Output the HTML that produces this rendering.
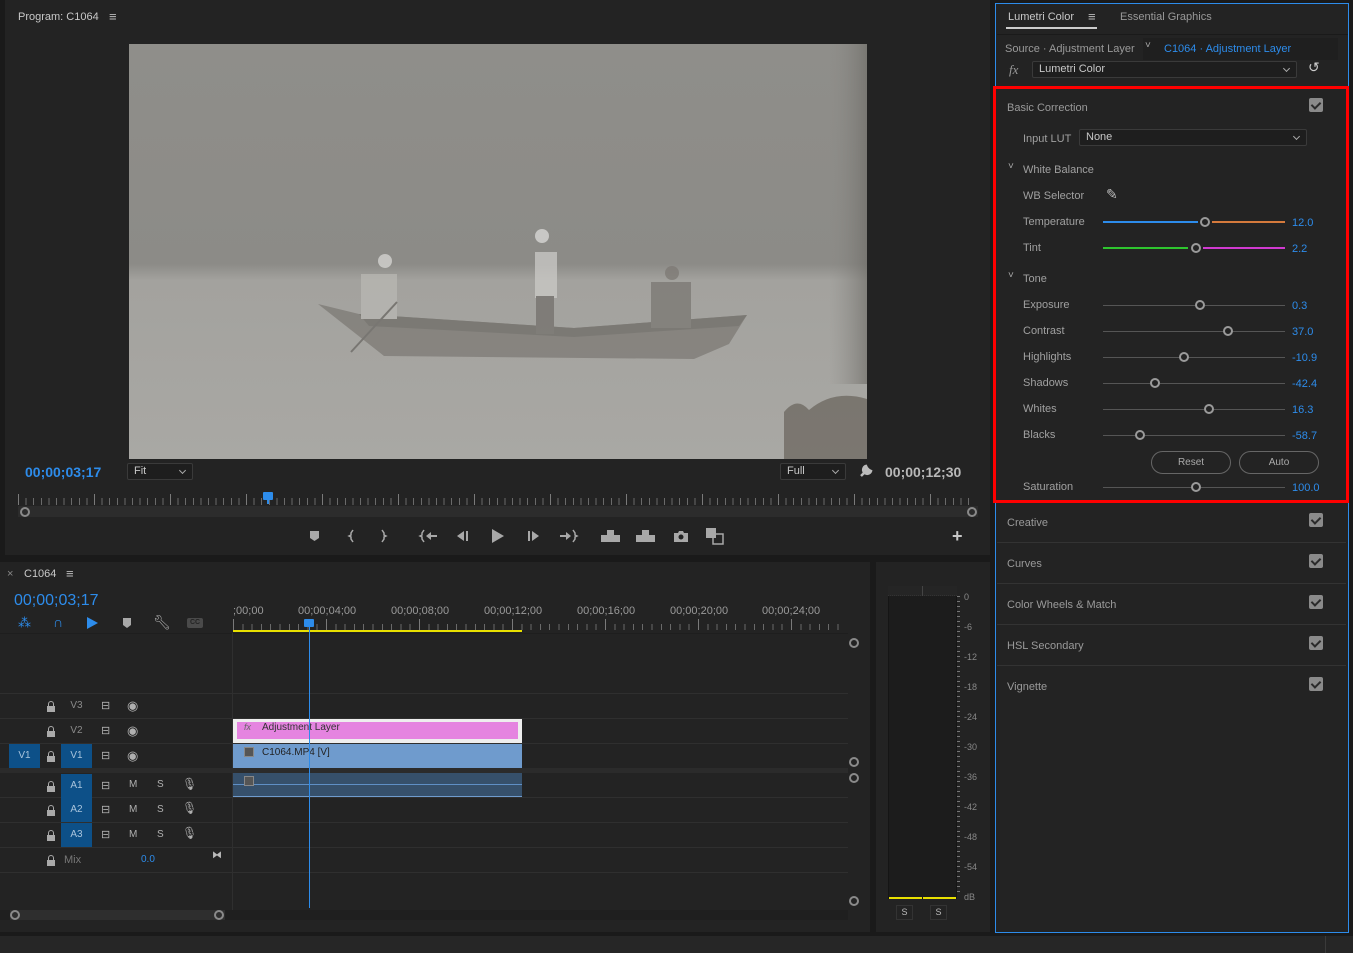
<!DOCTYPE html>
<html><head><meta charset="utf-8">
<style>
*{margin:0;padding:0;box-sizing:border-box}
body{width:1353px;height:953px;background:#1a1a1a;position:relative;overflow:hidden;font-family:"Liberation Sans",sans-serif;font-size:11px;color:#a8a8a8}
.a{position:absolute}
.p{position:absolute;background:#232323}
.t{position:absolute;white-space:nowrap}
.blue{color:#2d8ceb}
.dd{position:absolute;border:1px solid #3a3a3a;background:#1e1e1e;border-radius:2px;color:#c8c8c8;font-size:11px;padding:1px 6px}
.dd:after{content:"";position:absolute;right:7px;top:4px;width:4px;height:4px;border-right:1px solid #aaa;border-bottom:1px solid #aaa;transform:rotate(45deg)}
.lab{position:absolute;left:1023px;color:#a0a0a0;font-size:11px}
.trk{position:absolute;left:1103px;width:182px;height:1px;background:#555}
.knob{position:absolute;width:10px;height:10px;border:2px solid #9a9a9a;border-radius:50%;background:#232323}
.val{position:absolute;left:1292px;color:#2d8ceb;font-size:11px}
.chk{position:absolute;left:1309px;width:14px;height:14px;background:#8a8a8a;border-radius:2px}
.chk:after{content:"";position:absolute;left:4px;top:2px;width:4px;height:7px;border-right:2px solid #2a2a2a;border-bottom:2px solid #2a2a2a;transform:rotate(45deg)}
.sec{position:absolute;left:1007px;color:#9a9a9a;font-size:11px}
.hl{position:absolute;left:997px;width:349px;height:1px;background:#333}
.row{position:absolute;left:0;width:848px;height:1px;background:#2f2f2f}
.tb{position:absolute;width:31px;height:24px;background:#0d5088;color:#a9c4dc;font-size:10px;text-align:center;line-height:24px}
.tl{position:absolute;width:31px;height:24px;color:#8a8a8a;font-size:10px;text-align:center;line-height:24px}
.ic{position:absolute;color:#b0b0b0;font-size:11px}
.circ{position:absolute;width:10px;height:10px;border:2px solid #8a8a8a;border-radius:50%}
.lk{position:absolute;left:47px;width:8px;height:6px;background:#aaa}
.lk:before{content:"";position:absolute;left:1px;top:-5px;width:4px;height:5px;border:1.5px solid #aaa;border-bottom:none;border-radius:3px 3px 0 0}
</style></head><body>

<div class="p" style="left:5px;top:0;width:985px;height:555px"></div>
<div class="t" style="left:18px;top:11px;color:#c8c8c8">Program: C1064</div>
<div class="t" style="left:109px;top:9px;color:#bbb;font-size:13px">≡</div>

<svg class="a" style="left:129px;top:44px" width="738" height="415" viewBox="0 0 738 415">
<defs>
<linearGradient id="g1" x1="0" y1="0" x2="0" y2="1"><stop offset="0" stop-color="#8f8e8a"/><stop offset="0.53" stop-color="#8c8b87"/><stop offset="0.57" stop-color="#a3a29e"/><stop offset="1" stop-color="#a9a8a4"/></linearGradient>
<linearGradient id="g2" x1="0" y1="0" x2="1" y2="0"><stop offset="0" stop-color="#8a8985" stop-opacity="0"/><stop offset="1" stop-color="#6a6863"/></linearGradient>
</defs>
<rect width="738" height="415" fill="url(#g1)"/>
<rect x="700" y="0" width="38" height="340" fill="url(#g2)" opacity="0.6"/>
<g opacity="0.75">
<path d="M189,260 L230,270 L445,284 L618,271 L600,300 L565,315 L255,312 Z" fill="#7d7a75"/>
<path d="M230,270 L445,284 L618,271 L610,282 L445,293 L240,282Z" fill="#6e6b66"/>
<rect x="232" y="230" width="36" height="45" fill="#b9b8b3"/>
<circle cx="256" cy="217" r="7" fill="#d8d8d5"/>
<rect x="406" y="208" width="22" height="46" fill="#cbcac7"/>
<rect x="407" y="252" width="18" height="38" fill="#73706b"/>
<circle cx="413" cy="192" r="7" fill="#dcdcda"/>
<rect x="522" y="238" width="40" height="46" fill="#7a7772"/>
<circle cx="543" cy="229" r="7" fill="#7d7974"/>
<line x1="222" y1="308" x2="268" y2="258" stroke="#6a6763" stroke-width="2"/>
</g>
<path d="M655,368 Q668,352 680,366 Q705,345 738,355 L738,415 L655,415 Z" fill="#6f6a63" opacity="0.8"/>
</svg>

<div class="t blue" style="left:25px;top:464px;font-size:14px;font-weight:bold">00;00;03;17</div>
<div class="dd" style="left:127px;top:463px;width:66px;height:17px;line-height:13px">Fit</div>
<div class="dd" style="left:780px;top:463px;width:66px;height:17px;line-height:13px">Full</div>
<svg class="a" style="left:858px;top:463px" width="16" height="16"><path d="M3,13 L9,7 M8,3 a4,4 0 1 0 5,5 l-2,-1 -2,-2z" stroke="#bbb" stroke-width="2.5" fill="#bbb"/></svg>
<div class="t" style="left:885px;top:464px;font-size:14px;color:#b8b8b8;font-weight:bold">00;00;12;30</div>

<div class="a" style="left:18px;top:498px;width:957px;height:7px;background:repeating-linear-gradient(90deg,#6a6a6a 0 1px,transparent 1px 7.6px)"></div>
<div class="a" style="left:18px;top:494px;width:957px;height:11px;background:repeating-linear-gradient(90deg,#7a7a7a 0 1px,transparent 1px 76px)"></div>
<div class="a" style="left:18px;top:506px;width:960px;height:11px;background:#2c2c2c"></div>
<div class="circ" style="left:20px;top:507px"></div>
<div class="circ" style="left:967px;top:507px"></div>
<div class="a" style="left:263px;top:492px;width:10px;height:8px;background:#2d8ceb;border-radius:1px"></div>
<div class="a" style="left:267px;top:499px;width:2px;height:5px;background:#2d8ceb"></div>

<svg class="a" style="left:300px;top:526px" width="440" height="20" fill="#a8a8a8">
<path d="M10,5 h9 v7 l-4.5,3 l-4.5,-3z"/>
<path d="M53,4 l-2,3 v2 l-2,1 l2,1 v2 l2,3" stroke="#a8a8a8" stroke-width="1.5" fill="none"/>
<path d="M82,4 l2,3 v2 l2,1 l-2,1 v2 l-2,3" stroke="#a8a8a8" stroke-width="1.5" fill="none"/>
<path d="M124,4 l-2,3 v2 l-2,1 l2,1 v2 l2,3" stroke="#a8a8a8" stroke-width="1.5" fill="none"/><path d="M126,10 l5,-4 v3 h6 v2 h-6 v3z"/>
<path d="M157,10 l7,-5 v10z"/><rect x="166" y="5" width="2" height="10"/>
<path d="M192,3 l12,7 l-12,7z"/>
<rect x="228" y="5" width="2" height="10"/><path d="M232,5 l7,5 l-7,5z"/>
<path d="M260,9 h6 v-3 l5,4 l-5,4 v-3 h-6z"/><path d="M273,4 l2,3 v2 l2,1 l-2,1 v2 l-2,3" stroke="#a8a8a8" stroke-width="1.5" fill="none"/>
<path d="M301,9 h6 v-5 h7 v5 h6 v7 h-19z"/>
<path d="M336,9 h6 v-5 h7 v5 h6 v7 h-19z"/>
<path d="M374,7 h4 l1,-2 h4 l1,2 h4 v9 h-14z"/><circle cx="381" cy="11" r="2.5" fill="#232323"/>
<rect x="406" y="2" width="10" height="10"/><rect x="413" y="8" width="10" height="10" stroke="#a8a8a8" stroke-width="1.5" fill="none"/>
</svg>
<div class="t" style="left:952px;top:526px;font-size:18px;color:#c8c8c8;font-weight:bold">+</div>

<div class="p" style="left:0;top:562px;width:870px;height:370px"></div>
<div class="t" style="left:7px;top:568px;color:#888">×</div>
<div class="t" style="left:24px;top:568px;color:#c8c8c8">C1064</div>
<div class="t" style="left:66px;top:566px;color:#bbb;font-size:13px">≡</div>
<div class="t blue" style="left:14px;top:592px;font-size:16px">00;00;03;17</div>
<div class="t blue" style="left:18px;top:615px;font-size:13px">⁂</div>
<div class="t blue" style="left:53px;top:614px;font-size:14px;font-weight:bold">∩</div>
<div class="a" style="left:87px;top:617px;width:11px;height:12px;background:#2d8ceb;clip-path:polygon(0 0,100% 50%,0 100%)"></div>
<div class="a" style="left:123px;top:618px;width:8px;height:10px;background:#a8a8a8;clip-path:polygon(0 0,100% 0,100% 70%,50% 100%,0 70%)"></div>
<div class="t" style="left:153px;top:614px;color:#aaa;font-size:14px">🔧︎</div>
<div class="a" style="left:187px;top:618px;width:16px;height:10px;background:#4a4a4a;border-radius:2px;font-size:7px;color:#232323;text-align:center;line-height:10px;font-weight:bold">CC</div>

<div class="t" style="left:233px;top:605px;color:#9a9a9a;font-size:11px">;00;00</div>
<div class="t" style="left:298px;top:605px;color:#9a9a9a;font-size:11px">00;00;04;00</div>
<div class="t" style="left:391px;top:605px;color:#9a9a9a;font-size:11px">00;00;08;00</div>
<div class="t" style="left:484px;top:605px;color:#9a9a9a;font-size:11px">00;00;12;00</div>
<div class="t" style="left:577px;top:605px;color:#9a9a9a;font-size:11px">00;00;16;00</div>
<div class="t" style="left:670px;top:605px;color:#9a9a9a;font-size:11px">00;00;20;00</div>
<div class="t" style="left:762px;top:605px;color:#9a9a9a;font-size:11px">00;00;24;00</div>
<div class="a" style="left:233px;top:624px;width:612px;height:6px;background:repeating-linear-gradient(90deg,#6a6a6a 0 1px,transparent 1px 9.3px)"></div>
<div class="a" style="left:233px;top:619px;width:612px;height:11px;background:repeating-linear-gradient(90deg,#7a7a7a 0 1px,transparent 1px 93px)"></div>
<div class="a" style="left:233px;top:630px;width:289px;height:2px;background:#e8e000"></div>
<div class="a" style="left:0;top:633px;width:848px;height:1px;background:#1e1e1e"></div>
<div class="a" style="left:232px;top:633px;width:1px;height:277px;background:#2f2f2f"></div>

<div class="row" style="top:693px"></div><div class="row" style="top:718px"></div><div class="row" style="top:743px"></div>
<div class="a" style="left:0;top:768px;width:848px;height:5px;background:#2b2b2b"></div>
<div class="row" style="top:797px"></div><div class="row" style="top:822px"></div><div class="row" style="top:847px"></div><div class="row" style="top:872px"></div>

<div class="tb" style="left:9px;top:744px">V1</div>
<div class="tl" style="left:61px;top:694px">V3</div><div class="tl" style="left:61px;top:719px">V2</div>
<div class="tb" style="left:61px;top:744px">V1</div>
<div class="tb" style="left:61px;top:774px">A1</div><div class="tb" style="left:61px;top:798px">A2</div><div class="tb" style="left:61px;top:823px">A3</div>
<div class="lk" style="top:706px"></div><div class="lk" style="top:731px"></div><div class="lk" style="top:756px"></div>
<div class="lk" style="top:786px"></div><div class="lk" style="top:810px"></div><div class="lk" style="top:835px"></div><div class="lk" style="top:860px"></div>
<div class="ic" style="left:101px;top:699px">⊟</div><div class="ic" style="left:101px;top:724px">⊟</div><div class="ic" style="left:101px;top:749px">⊟</div>
<div class="ic" style="left:101px;top:779px">⊟</div><div class="ic" style="left:101px;top:803px">⊟</div><div class="ic" style="left:101px;top:828px">⊟</div>
<div class="ic" style="left:127px;top:698px;font-size:13px">◉</div><div class="ic" style="left:127px;top:723px;font-size:13px">◉</div><div class="ic" style="left:127px;top:748px;font-size:13px">◉</div>
<div class="ic" style="left:129px;top:779px;font-size:10px">M</div><div class="ic" style="left:129px;top:804px;font-size:10px">M</div><div class="ic" style="left:129px;top:829px;font-size:10px">M</div>
<div class="ic" style="left:157px;top:779px;font-size:10px">S</div><div class="ic" style="left:157px;top:804px;font-size:10px">S</div><div class="ic" style="left:157px;top:829px;font-size:10px">S</div>
<div class="ic" style="left:182px;top:777px;font-size:12px">🎙︎</div><div class="ic" style="left:182px;top:801px;font-size:12px">🎙︎</div><div class="ic" style="left:182px;top:826px;font-size:12px">🎙︎</div>
<div class="t" style="left:64px;top:854px;color:#777">Mix</div>
<div class="t blue" style="left:141px;top:854px;font-size:10px">0.0</div>
<div class="t" style="left:212px;top:850px;color:#bbb;font-size:10px">⧓</div>

<div class="a" style="left:233px;top:719px;width:289px;height:24px;background:#eeeeee"></div>
<div class="a" style="left:237px;top:722px;width:281px;height:17px;background:#e584e0"></div>
<div class="t" style="left:244px;top:722px;font-size:9px;color:#666;font-style:italic">fx</div>
<div class="t" style="left:262px;top:722px;font-size:10px;color:#333">Adjustment Layer</div>
<div class="a" style="left:233px;top:744px;width:289px;height:24px;background:#6f9bcd"></div>
<div class="a" style="left:244px;top:747px;width:10px;height:10px;background:#555;border:1px solid #888"></div>
<div class="t" style="left:262px;top:747px;font-size:10px;color:#222">C1064.MP4 [V]</div>
<div class="a" style="left:233px;top:773px;width:289px;height:24px;background:#36506b;border-bottom:1px solid #6f9bcd"></div>
<div class="a" style="left:233px;top:784px;width:289px;height:1px;background:#5f8fc5"></div>
<div class="a" style="left:244px;top:776px;width:10px;height:10px;background:#555;border:1px solid #888"></div>

<div class="a" style="left:309px;top:620px;width:1px;height:288px;background:#2d8ceb"></div>
<div class="a" style="left:304px;top:619px;width:10px;height:8px;background:#2d8ceb;border-radius:1px"></div>

<div class="circ" style="left:849px;top:638px"></div><div class="circ" style="left:849px;top:757px"></div>
<div class="circ" style="left:849px;top:773px"></div><div class="circ" style="left:849px;top:896px"></div>
<div class="a" style="left:0;top:910px;width:848px;height:10px;background:#1f1f1f"></div>
<div class="a" style="left:10px;top:910px;width:215px;height:10px;background:#2e2e2e"></div>
<div class="circ" style="left:10px;top:910px"></div><div class="circ" style="left:214px;top:910px"></div>

<div class="p" style="left:876px;top:562px;width:114px;height:370px"></div>
<div class="a" style="left:888px;top:586px;width:69px;height:313px;background:#1c1c1c;border:1px solid #151515"></div>
<div class="a" style="left:888px;top:586px;width:69px;height:10px;background:#252525;border-bottom:1px dotted #333"></div>
<div class="a" style="left:922px;top:586px;width:1px;height:10px;background:#444"></div>
<div class="a" style="left:889px;top:897px;width:33px;height:2px;background:#e8e000"></div>
<div class="a" style="left:923px;top:897px;width:33px;height:2px;background:#e8e000"></div>
<div class="a" style="left:957px;top:596px;width:3px;height:300px;background:repeating-linear-gradient(180deg,#777 0 1px,transparent 1px 5px)"></div>
<div class="a" style="left:964px;top:582px;font-size:9px;color:#888;line-height:30px">0<br>-6<br>-12<br>-18<br>-24<br>-30<br>-36<br>-42<br>-48<br>-54<br>dB</div>
<div class="a" style="left:896px;top:905px;width:17px;height:15px;border:1px solid #333;font-size:9px;color:#bbb;text-align:center;line-height:13px">S</div>
<div class="a" style="left:930px;top:905px;width:17px;height:15px;border:1px solid #333;font-size:9px;color:#bbb;text-align:center;line-height:13px">S</div>

<div class="p" style="left:995px;top:3px;width:354px;height:930px;border:1px solid #2d8ceb"></div>
<div class="t" style="left:1008px;top:11px;color:#c8c8c8">Lumetri Color</div>
<div class="t" style="left:1088px;top:9px;color:#bbb;font-size:13px">≡</div>
<div class="a" style="left:1006px;top:27px;width:91px;height:2px;background:#ccc"></div>
<div class="t" style="left:1120px;top:11px;color:#999">Essential Graphics</div>
<div class="a" style="left:997px;top:34px;width:351px;height:1px;background:#1a1a1a"></div>
<div class="t" style="left:1005px;top:43px;color:#9a9a9a">Source · Adjustment Layer</div>
<div class="a" style="left:1143px;top:38px;width:195px;height:22px;background:#1f1f1f"></div>
<div class="t blue" style="left:1164px;top:43px">C1064 · Adjustment Layer</div>
<div class="t" style="left:1145px;top:40px;color:#aaa;font-size:10px">˅</div>
<div class="t" style="left:1009px;top:62px;color:#999;font-style:italic;font-family:'Liberation Serif',serif;font-size:13px">fx</div>
<div class="dd" style="left:1032px;top:61px;width:265px;height:17px;line-height:13px">Lumetri Color</div>
<div class="t" style="left:1308px;top:59px;color:#ccc;font-size:14px">↺</div>

<div class="a" style="left:993px;top:86px;width:356px;height:417px;border:3px solid #ff0000"></div>
<div class="sec" style="top:102px">Basic Correction</div>
<div class="chk" style="top:98px"></div>
<div class="lab" style="top:133px">Input LUT</div>
<div class="dd" style="left:1079px;top:129px;width:228px;height:17px;line-height:13px">None</div>
<div class="t" style="left:1008px;top:161px;color:#aaa;font-size:10px">˅</div>
<div class="lab" style="top:164px">White Balance</div>
<div class="lab" style="top:190px">WB Selector</div>
<div class="t" style="left:1106px;top:186px;color:#bbb;font-size:14px">✎</div>
<div class="lab" style="top:216px">Temperature</div>
<div class="a" style="left:1103px;top:221px;width:95px;height:2px;background:#2d8ceb"></div>
<div class="a" style="left:1212px;top:221px;width:73px;height:2px;background:#d57a3c"></div>
<div class="knob" style="left:1200px;top:217px"></div>
<div class="val" style="top:217px">12.0</div>
<div class="lab" style="top:242px">Tint</div>
<div class="a" style="left:1103px;top:247px;width:85px;height:2px;background:#2ec52e"></div>
<div class="a" style="left:1203px;top:247px;width:82px;height:2px;background:#d03ad0"></div>
<div class="knob" style="left:1191px;top:243px"></div>
<div class="val" style="top:243px">2.2</div>
<div class="t" style="left:1008px;top:270px;color:#aaa;font-size:10px">˅</div>
<div class="lab" style="top:273px">Tone</div>

<div class="lab" style="top:299px">Exposure</div><div class="trk" style="top:305px"></div><div class="knob" style="left:1195px;top:300px"></div><div class="val" style="top:300px">0.3</div>
<div class="lab" style="top:325px">Contrast</div><div class="trk" style="top:331px"></div><div class="knob" style="left:1223px;top:326px"></div><div class="val" style="top:326px">37.0</div>
<div class="lab" style="top:351px">Highlights</div><div class="trk" style="top:357px"></div><div class="knob" style="left:1179px;top:352px"></div><div class="val" style="top:352px">-10.9</div>
<div class="lab" style="top:377px">Shadows</div><div class="trk" style="top:383px"></div><div class="knob" style="left:1150px;top:378px"></div><div class="val" style="top:378px">-42.4</div>
<div class="lab" style="top:403px">Whites</div><div class="trk" style="top:409px"></div><div class="knob" style="left:1204px;top:404px"></div><div class="val" style="top:404px">16.3</div>
<div class="lab" style="top:429px">Blacks</div><div class="trk" style="top:435px"></div><div class="knob" style="left:1135px;top:430px"></div><div class="val" style="top:430px">-58.7</div>
<div class="a" style="left:1151px;top:451px;width:80px;height:23px;border:1px solid #666;border-radius:12px;color:#aaa;font-size:10px;text-align:center;line-height:21px">Reset</div>
<div class="a" style="left:1239px;top:451px;width:80px;height:23px;border:1px solid #666;border-radius:12px;color:#aaa;font-size:10px;text-align:center;line-height:21px">Auto</div>
<div class="lab" style="top:481px">Saturation</div><div class="trk" style="top:487px"></div><div class="knob" style="left:1191px;top:482px"></div><div class="val" style="top:482px">100.0</div>

<div class="sec" style="top:517px">Creative</div><div class="chk" style="top:513px"></div>
<div class="hl" style="top:542px"></div>
<div class="sec" style="top:558px">Curves</div><div class="chk" style="top:554px"></div>
<div class="hl" style="top:583px"></div>
<div class="sec" style="top:599px">Color Wheels &amp; Match</div><div class="chk" style="top:595px"></div>
<div class="hl" style="top:624px"></div>
<div class="sec" style="top:640px">HSL Secondary</div><div class="chk" style="top:636px"></div>
<div class="hl" style="top:665px"></div>
<div class="sec" style="top:681px">Vignette</div><div class="chk" style="top:677px"></div>

<div class="a" style="left:0;top:936px;width:1353px;height:17px;background:#262626"></div>
<div class="a" style="left:1325px;top:936px;width:1px;height:17px;background:#3a3a3a"></div>
</body></html>
